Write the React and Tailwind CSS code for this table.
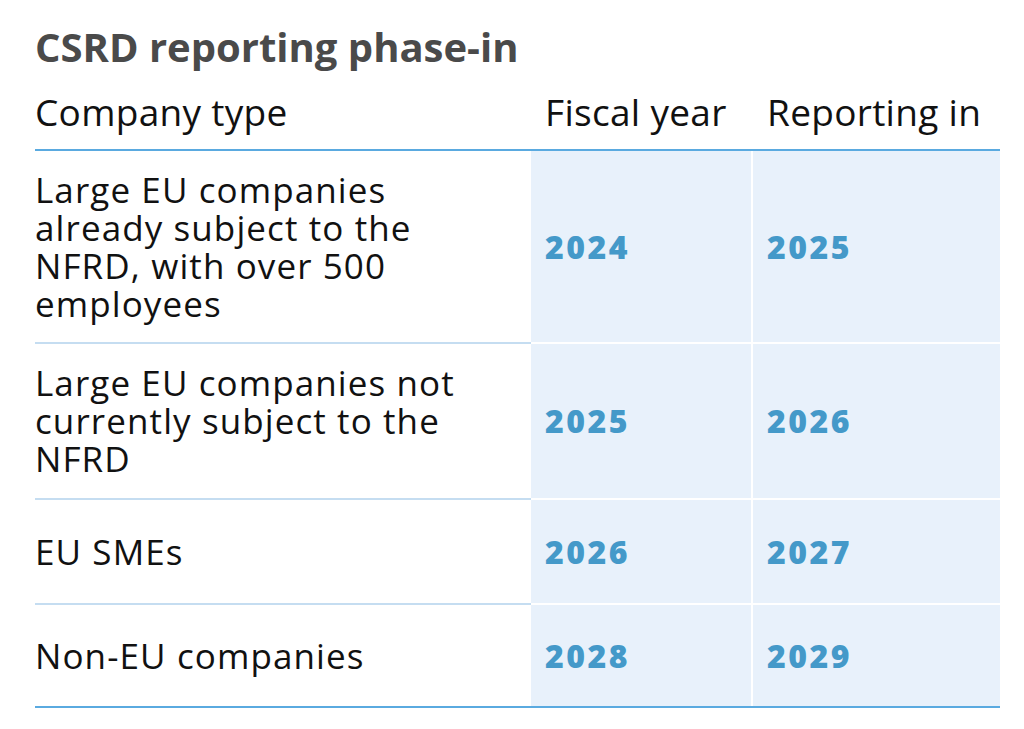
const rows = [
  {
    lines: ["Large EU companies", "already subject to the", "NFRD, with over 500", "employees"],
    fiscal: "2024",
    reporting: "2025",
    h: "h-[193px]",
  },
  {
    lines: ["Large EU companies not", "currently subject to the", "NFRD"],
    fiscal: "2025",
    reporting: "2026",
    h: "h-[156px]",
  },
  { lines: ["EU SMEs"], fiscal: "2026", reporting: "2027", h: "h-[105px]" },
  { lines: ["Non-EU companies"], fiscal: "2028", reporting: "2029", h: "h-[101px]" },
];

export default function App() {
  return (
    <div className="w-[1024px] h-[729px] bg-white pl-[35px] pt-[24px] font-['Open_Sans',sans-serif]">
      <h1 className="text-[40px] leading-[46px] font-bold text-[#4a4a4a]">
        CSRD reporting phase-in
      </h1>

      <div className="w-[965px] mt-[22px]">
        {/* header */}
        <div className="flex pb-[17px] border-b-2 border-[#5aaae0] text-[37px] leading-[40px] tracking-[0.3px] text-[#111]">
          <div className="w-[496px]">Company type</div>
          <div className="w-[222px] pl-[14px]">Fiscal year</div>
          <div className="flex-1 pl-[14px]">Reporting in</div>
        </div>

        {rows.map((r, i) => (
          <div key={r.fiscal} className="flex">
            <div
              className={`w-[496px] ${r.h} flex flex-col justify-center text-[35px] leading-[38px] tracking-[1.1px] text-[#111] ${
                i < rows.length - 1 ? "border-b-2 border-[#c5ddf1]" : ""
              }`}
            >
              {r.lines.map((l) => (
                <span key={l} className="whitespace-nowrap">
                  {l}
                </span>
              ))}
            </div>
            <div
              className={`w-[220px] mr-[2px] ${r.h} flex items-center pl-[14px] bg-[#e8f1fb] text-[32px] font-extrabold tracking-[2.5px] text-[#4499c9] ${
                i < rows.length - 1 ? "border-b-2 border-white" : ""
              }`}
            >
              {r.fiscal}
            </div>
            <div
              className={`flex-1 ${r.h} flex items-center pl-[14px] bg-[#e8f1fb] text-[32px] font-extrabold tracking-[2.5px] text-[#4499c9] ${
                i < rows.length - 1 ? "border-b-2 border-white" : ""
              }`}
            >
              {r.reporting}
            </div>
          </div>
        ))}
        <div className="h-[2px] bg-[#5aaae0]" />
      </div>
    </div>
  );
}
